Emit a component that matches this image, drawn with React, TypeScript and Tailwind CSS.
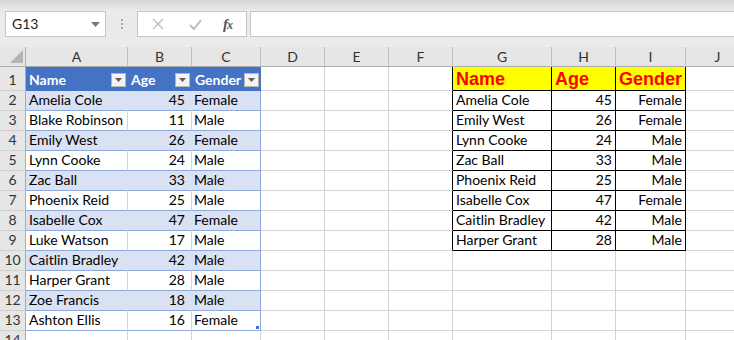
import { ReactNode } from "react";

const cols = [
  { k: "A", w: "w-[102px]" },
  { k: "B", w: "w-[64px]" },
  { k: "C", w: "w-[69px]" },
  { k: "D", w: "w-[64px]" },
  { k: "E", w: "w-[64px]" },
  { k: "F", w: "w-[64px]" },
  { k: "G", w: "w-[99px]" },
  { k: "H", w: "w-[64px]" },
  { k: "I", w: "w-[70px]" },
  { k: "J", w: "w-[64px]" },
];

const people: [string, number, string][] = [
  ["Amelia Cole", 45, "Female"],
  ["Blake Robinson", 11, "Male"],
  ["Emily West", 26, "Female"],
  ["Lynn Cooke", 24, "Male"],
  ["Zac Ball", 33, "Male"],
  ["Phoenix Reid", 25, "Male"],
  ["Isabelle Cox", 47, "Female"],
  ["Luke Watson", 17, "Male"],
  ["Caitlin Bradley", 42, "Male"],
  ["Harper Grant", 28, "Male"],
  ["Zoe Francis", 18, "Male"],
  ["Ashton Ellis", 16, "Female"],
];

const picked: [string, number, string][] = [
  ["Amelia Cole", 45, "Female"],
  ["Emily West", 26, "Female"],
  ["Lynn Cooke", 24, "Male"],
  ["Zac Ball", 33, "Male"],
  ["Phoenix Reid", 25, "Male"],
  ["Isabelle Cox", 47, "Female"],
  ["Caitlin Bradley", 42, "Male"],
  ["Harper Grant", 28, "Male"],
];

const rows = Array.from({ length: 14 }, (_, i) => i + 1);

function FilterBtn() {
  return (
    <span className="self-end mb-[2px] mr-[1px] w-[15px] h-[14px] shrink-0 border border-[#b8b8b8] bg-[#f3f3f3] flex items-center justify-center">
      <svg width="7" height="4" viewBox="0 0 7 4">
        <path d="M0 0h7L3.5 4z" fill="#5f5f5f" />
      </svg>
    </span>
  );
}

function cellContent(r: number, c: string): { cls: string; body: ReactNode } {
  const base = "border-r border-b flex items-end pb-[1px] overflow-hidden whitespace-nowrap";
  // left table A:C rows 1..13
  if ((c === "A" || c === "B" || c === "C") && r <= 13) {
    if (r === 1) {
      const label = c === "A" ? "Name" : c === "B" ? "Age" : "Gender";
      return {
        cls: `${base} bg-[#4472c4] border-b-[#4472c4] border-r-[#4472c4] text-white font-bold justify-between pl-[3px]`,
        body: (
          <>
            <span>{label}</span>
            <FilterBtn />
          </>
        ),
      };
    }
    const p = people[r - 2];
    const band = r % 2 === 0;
    const bg = band ? "bg-[#d9e1f2]" : "bg-white";
    const rc = c === "C" ? "border-r-[#8ea9db]" : band ? "border-r-[#d9e1f2]" : "border-r-[#d4d4d4]";
    if (c === "A") return { cls: `${base} ${bg} ${rc} border-b-[#8ea9db] pl-[3px]`, body: p[0] };
    if (c === "B") return { cls: `${base} ${bg} ${rc} border-b-[#8ea9db] justify-end pr-[6px]`, body: p[1] };
    return { cls: `${base} ${bg} ${rc} border-b-[#8ea9db] pl-[2px]`, body: p[2] };
  }
  // right table G:I rows 1..9
  if ((c === "G" || c === "H" || c === "I") && r <= 9) {
    if (r === 1) {
      const label = c === "G" ? "Name" : c === "H" ? "Age" : "Gender";
      return {
        cls: `${base} bg-[#ffff00] border-black text-[#ff0000] font-bold text-[18px] font-['Liberation_Sans',Arial,sans-serif] pl-[3px] pb-[2px]`,
        body: label,
      };
    }
    const p = picked[r - 2];
    if (c === "G") return { cls: `${base} border-black pl-[3px]`, body: p[0] };
    if (c === "H") return { cls: `${base} border-black justify-end pr-[3px]`, body: p[1] };
    return { cls: `${base} border-black justify-end pr-[3px]`, body: p[2] };
  }
  if (c === "F" && r <= 9) {
    return { cls: `${base} border-r-black border-b-[#d4d4d4]`, body: null };
  }
  return { cls: `${base} border-[#d4d4d4]`, body: null };
}

export default function App() {
  return (
    <div className="w-[734px] h-[340px] overflow-hidden bg-white font-['Lato','Noto_Sans',sans-serif] text-[14px] text-black leading-[18px]">
      {/* top ribbon edge */}
      <div className="h-[11px] bg-gradient-to-b from-[#d6d6d6] to-[#ebebeb]" />

      {/* formula bar */}
      <div className="h-[26px] bg-[#ebebeb] flex items-stretch">
        <div className="ml-[5px] w-[101px] bg-white border border-[#c6c6c6] flex items-center pl-[6px] pr-[5px] justify-between text-[#222]">
          <span className="text-[14px]">G13</span>
          <svg width="9" height="5" viewBox="0 0 9 5">
            <path d="M0 0h9L4.5 5z" fill="#777" />
          </svg>
        </div>
        <div className="w-[31px] flex flex-col items-center justify-center gap-[2px]">
          <span className="w-[2px] h-[2px] bg-[#a8a8a8]" />
          <span className="w-[2px] h-[2px] bg-[#a8a8a8]" />
          <span className="w-[2px] h-[2px] bg-[#a8a8a8]" />
        </div>
        <div className="w-[110px] bg-white border border-[#c6c6c6] flex items-center">
          <svg className="ml-[14px]" width="12" height="12" viewBox="0 0 12 12">
            <path d="M1 1l10 10M11 1L1 11" stroke="#bdbdbd" strokeWidth="1.4" />
          </svg>
          <svg className="ml-[25px]" width="13" height="11" viewBox="0 0 13 11">
            <path d="M1 6l4 4 7-9" stroke="#bdbdbd" strokeWidth="2" fill="none" />
          </svg>
          <span className="ml-[21px] italic text-[15px] text-[#555] font-['Liberation_Serif',serif] font-bold tracking-[-1px]">
            f<span className="text-[12px]">x</span>
          </span>
        </div>
        <div className="ml-[3px] flex-1 bg-white border border-[#c6c6c6] border-r-0" />
      </div>
      <div className="h-[10px] bg-[#ebebeb]" />

      {/* column headers */}
      <div className="flex h-[20px] bg-[#e6e6e6] text-[#333]">
        <div className="w-[26px] shrink-0 border-r border-b border-[#ababab] relative">
          <svg className="absolute left-[10px] top-[3px]" width="13" height="13" viewBox="0 0 13 13">
            <path d="M13 0v13H0z" fill="#b4b4b4" />
          </svg>
        </div>
        {cols.map((c) => (
          <div
            key={c.k}
            className={`${c.w} shrink-0 border-r border-b border-r-[#c0c0c0] border-b-[#ababab] flex items-center justify-center`}
          >
            {c.k}
          </div>
        ))}
      </div>

      {/* rows */}
      {rows.map((r) => (
        <div key={r} className={r === 1 ? "flex h-[24px]" : "flex h-[20px]"}>
          <div className="w-[26px] shrink-0 bg-[#e6e6e6] border-r border-b border-r-[#ababab] border-b-[#cfcfcf] flex items-end justify-center pb-[1px] text-[#333]">
            {r}
          </div>
          {cols.map((c) => {
            const { cls, body } = cellContent(r, c.k);
            return (
              <div key={c.k} className={`${c.w} shrink-0 relative ${cls}`}>
                {body}
                {r === 13 && c.k === "C" && (
                  <span className="absolute right-[1px] bottom-[1px] w-[3px] h-[3px] bg-[#4472c4]" />
                )}
              </div>
            );
          })}
        </div>
      ))}
    </div>
  );
}
